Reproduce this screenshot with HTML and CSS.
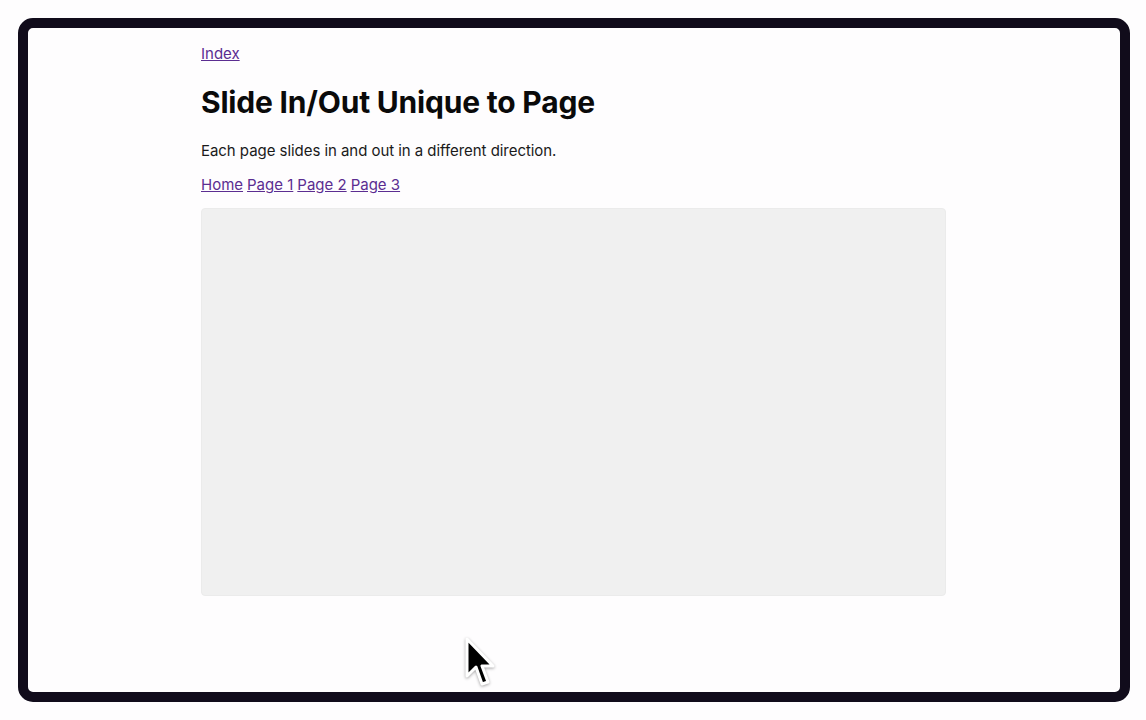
FILE: index.html
```html
<!DOCTYPE html>
<html lang="en">
<head>
<meta charset="utf-8">
<title>Slide In/Out Unique to Page</title>
<link rel="stylesheet" href="styles.css">
</head>
<body>
<div class="frame">
  <main class="content">
    <a class="index-link" href="#">Index</a>
    <h1 class="title">Slide In/Out Unique to Page</h1>
    <p class="lead">Each page slides in and out in a different direction.</p>
    <nav class="nav">
      <a href="#">Home</a>
      <a href="#">Page 1</a>
      <a href="#">Page 2</a>
      <a href="#">Page 3</a>
    </nav>
    <div class="stage"></div>
  </main>
</div>
<svg class="cursor" width="36" height="56" viewBox="0 0 36 56" aria-hidden="true">
  <path d="M4 4 L4 41 L13 32 L19 49 L25 47 L19 31 L30 31 Z" fill="#000" stroke="#fff" stroke-width="3" stroke-linejoin="round"/>
</svg>
</body>
</html>
```
FILE: styles.css
```css
* { box-sizing: border-box; }
html, body { height: 100%; }
body {
  margin: 0;
  background: #fefdfe;
  font-family: Inter, "Noto Sans", sans-serif;
  color: #111;
  padding: 18px 16px 18px 18px;
}
.frame {
  height: 684px;
  width: 1112px;
  border: 10px solid #110c1b;
  border-radius: 15px;
  background: #fefdfe;
  padding-top: 16px;
}
.content {
  width: 746px;
  margin: 0 auto;
  display: flex;
  flex-direction: column;
  align-items: flex-start;
}
a { color: #5b2d91; text-decoration: underline; }
.index-link {
  font-size: 15px;
  line-height: 20px;
}
.title {
  font-size: 30px;
  font-weight: 700;
  line-height: 36px;
  margin: 20px 0 0;
  color: #0a0a0a;
  letter-spacing: -0.2px;
}
.lead {
  font-size: 15px;
  line-height: 19px;
  margin: 21px 0 0;
  color: #1a1a1a;
  letter-spacing: -0.05px;
}
.nav {
  margin-top: 15px;
  display: flex;
  gap: 4px;
  font-size: 15px;
  line-height: 20px;
}
.stage {
  margin-top: 13px;
  width: 745px;
  height: 388px;
  background: #f0f0f0;
  border: 1px solid #ebebeb;
  border-radius: 4px;
}
.cursor {
  position: absolute;
  left: 463px;
  top: 635px;
  filter: drop-shadow(0 1px 1.5px rgba(0,0,0,0.35));
}
```
